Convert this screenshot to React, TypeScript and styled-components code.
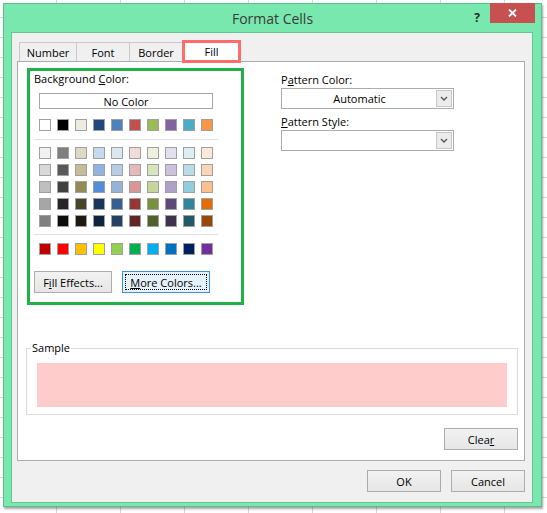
import styled, { createGlobalStyle } from 'styled-components'

const THEME_COLORS = [
  '#ffffff', '#000000', '#eeece1', '#1f497d', '#4f81bd',
  '#c0504d', '#9bbb59', '#8064a2', '#4bacc6', '#f79646',
]

const TINT_ROWS = [
  ['#f2f2f2', '#7f7f7f', '#ddd9c4', '#c5d9f1', '#dce6f1', '#f2dcdb', '#ebf1de', '#e4dfec', '#daeef3', '#fde9d9'],
  ['#d9d9d9', '#595959', '#c4bd97', '#8db4e2', '#b8cce4', '#e6b8b7', '#d8e4bc', '#ccc0da', '#b7dee8', '#fcd5b4'],
  ['#bfbfbf', '#404040', '#948a54', '#538dd5', '#95b3d7', '#da9694', '#c4d79b', '#b1a0c7', '#92cddc', '#fabf8f'],
  ['#a6a6a6', '#262626', '#494529', '#16365c', '#366092', '#963634', '#76933c', '#60497a', '#31869b', '#e26b0a'],
  ['#808080', '#0d0d0d', '#1d1b10', '#0f243e', '#244062', '#632523', '#4f6228', '#403151', '#215967', '#974706'],
]

const STANDARD_COLORS = [
  '#c00000', '#ff0000', '#ffc000', '#ffff00', '#92d050',
  '#00b050', '#00b0f0', '#0070c0', '#002060', '#7030a0',
]

const TABS = [
  { label: 'Number', width: 58 },
  { label: 'Font', width: 54 },
  { label: 'Border', width: 54 },
  { label: 'Fill', width: 59, active: true },
]

const GlobalStyle = createGlobalStyle`
  html, body {
    margin: 0;
    padding: 0;
  }
  body {
    width: 547px;
    height: 513px;
    overflow: hidden;
    background-color: #ffffff;
    background-image:
      linear-gradient(to right, #d6d6d6 1px, transparent 1px),
      linear-gradient(to bottom, #d6d6d6 1px, transparent 1px);
    background-size: 64px 100%, 100% 20px;
    background-position: 56px 0, 0 17px;
    font-family: 'Segoe UI', 'Open Sans', sans-serif;
    font-size: 11px;
    color: #000000;
  }
`

const Desktop = styled.div`
  padding: 3px 0 0 3px;
`

const DialogWindow = styled.div`
  box-sizing: border-box;
  width: 539px;
  height: 504px;
  display: flex;
  flex-direction: column;
  background: #78e8ae;
  border: 1px solid #5cbf8a;
  box-shadow: 1px 2px 2px rgba(0, 0, 0, 0.35);
`

const TitleBar = styled.div`
  height: 28px;
  display: grid;
  grid-template-columns: 1fr auto 1fr;
  align-items: center;
`

const Title = styled.div`
  grid-column: 2;
  font-size: 14px;
  color: #3a3a3a;
  padding-top: 1px;
`

const TitleControls = styled.div`
  grid-column: 3;
  justify-self: end;
  align-self: start;
  display: flex;
  align-items: flex-start;
`

const HelpGlyph = styled.span`
  margin: 5px 10px 0 0;
  font-size: 12px;
  font-weight: 700;
  color: #2b2b2b;
`

const CloseButton = styled.div`
  width: 45px;
  height: 20px;
  margin: -1px 6px 0 0;
  background: #c75050;
  display: flex;
  align-items: center;
  justify-content: center;
`

const Client = styled.div`
  flex: 1;
  margin: 0 8px 3px 7px;
  padding: 7px 7px 10px 5px;
  display: flex;
  flex-direction: column;
  background: #f0f0f0;
  border: 1px solid #62c892;
`

const TabRow = styled.div`
  height: 21px;
  padding-left: 2px;
  display: flex;
  align-items: flex-end;
  position: relative;
  z-index: 1;
`

const Tab = styled.div<{ $active?: boolean; $width: number }>`
  box-sizing: border-box;
  width: ${({ $width }) => $width}px;
  height: ${({ $active }) => ($active ? 23 : 19)}px;
  margin-left: -1px;
  margin-bottom: ${({ $active }) => ($active ? -2 : 0)}px;
  display: flex;
  align-items: center;
  justify-content: center;
  background: ${({ $active }) => ($active ? '#ffffff' : '#f0f0f0')};
  border: ${({ $active }) => ($active ? '3px solid #ff6d6d' : '1px solid #c9c9c9')};
  border-bottom: ${({ $active }) => ($active ? '3px solid #ff6d6d' : 'none')};
  padding-top: ${({ $active }) => ($active ? 0 : 1)}px;

  &:first-child {
    margin-left: 0;
  }
`

const Panel = styled.div`
  box-sizing: border-box;
  height: 400px;
  display: flex;
  flex-direction: column;
  background: #ffffff;
  border: 1px solid #acacac;
  padding: 6px 6px 0 8px;
`

const TopSection = styled.div`
  display: flex;
  align-items: flex-start;
`

const ColorGroup = styled.div`
  box-sizing: border-box;
  width: 217px;
  height: 237px;
  margin-left: 1px;
  padding: 0 0 0 4px;
  border: 3px solid #22b04b;
  display: flex;
  flex-direction: column;
`

const Label = styled.div`
  line-height: 16px;
  white-space: nowrap;
`

const Key = styled.span`
  text-decoration: underline;
  text-underline-offset: 1px;
`

const NoColorButton = styled.div`
  box-sizing: border-box;
  width: 174px;
  height: 16px;
  margin: 6px 0 0 5px;
  display: flex;
  align-items: center;
  justify-content: center;
  border: 1px solid #a6a6a6;
  background: #ffffff;
`

const SwatchRow = styled.div<{ $gap: number }>`
  display: flex;
  gap: 6px;
  margin: ${({ $gap }) => $gap}px 0 0 5px;
`

const Swatch = styled.div`
  box-sizing: border-box;
  width: 12px;
  height: 12px;
  border: 1px solid #a0a0a0;
`

const Separator = styled.div`
  width: 184px;
  height: 1px;
  margin-top: 8px;
  background: #e2e2e2;
`

const ButtonRow = styled.div`
  display: flex;
  gap: 10px;
  margin-top: 16px;
`

const PushButton = styled.div<{ $width: number; $focused?: boolean }>`
  box-sizing: border-box;
  width: ${({ $width }) => $width}px;
  height: 22px;
  padding: 2px;
  border: 1px solid ${({ $focused }) => ($focused ? '#3c8fe0' : '#adadad')};
  background: ${({ $focused }) =>
    $focused ? '#e5f1fb' : 'linear-gradient(#f2f2f2, #e6e6e6)'};
  display: flex;
`

const ButtonFace = styled.div<{ $focused?: boolean }>`
  flex: 1;
  display: flex;
  align-items: center;
  justify-content: center;
  outline: ${({ $focused }) => ($focused ? '1px dotted #000000' : 'none')};
  outline-offset: -1px;
  white-space: nowrap;
`

const PatternColumn = styled.div`
  margin: 4px 0 0 37px;
  display: flex;
  flex-direction: column;
`

const Dropdown = styled.div<{ $gap: number }>`
  box-sizing: border-box;
  width: 173px;
  height: 21px;
  margin-bottom: ${({ $gap }) => $gap}px;
  padding: 1px;
  display: flex;
  border: 1px solid #ababab;
  background: #ffffff;
`

const DropdownValue = styled.div`
  flex: 1;
  display: flex;
  align-items: center;
  justify-content: center;
`

const DropdownArrow = styled.div`
  box-sizing: border-box;
  width: 16px;
  display: flex;
  align-items: center;
  justify-content: center;
  background: #ececec;
  border: 1px solid #c6c6c6;
`

const SampleGroup = styled.fieldset`
  box-sizing: border-box;
  width: 492px;
  margin: 36px 0 0 0;
  padding: 0 10px 7px;
  min-width: 0;
  border: 1px solid #dcdcdc;
`

const SampleLegend = styled.legend`
  margin-left: -6px;
  padding: 0 1px;
  line-height: 14px;
`

const SampleFill = styled.div`
  height: 44px;
  margin-top: 8px;
  background: #ffcccc;
`

const ClearRow = styled.div`
  display: flex;
  justify-content: flex-end;
  margin: 13px 0 0 0;
`

const Footer = styled.div`
  display: flex;
  justify-content: flex-end;
  gap: 10px;
  margin-top: 9px;
`

const Chevron = () => (
  <svg width="8" height="5" viewBox="0 0 8 5">
    <polyline points="1,1 4,4 7,1" fill="none" stroke="#555555" strokeWidth="1.4" />
  </svg>
)

const CloseGlyph = () => (
  <svg width="9" height="8" viewBox="0 0 9 8">
    <path d="M1 0.5 L8 7.5 M8 0.5 L1 7.5" stroke="#ffffff" strokeWidth="1.8" />
  </svg>
)

const App = () => (
  <>
    <GlobalStyle />
    <Desktop>
      <DialogWindow>
        <TitleBar>
          <Title>Format Cells</Title>
          <TitleControls>
            <HelpGlyph>?</HelpGlyph>
            <CloseButton>
              <CloseGlyph />
            </CloseButton>
          </TitleControls>
        </TitleBar>
        <Client>
          <TabRow>
            {TABS.map((tab) => (
              <Tab key={tab.label} $active={tab.active} $width={tab.width}>
                {tab.label}
              </Tab>
            ))}
          </TabRow>
          <Panel>
            <TopSection>
              <ColorGroup>
                <Label>
                  Background <Key>C</Key>olor:
                </Label>
                <NoColorButton>No Color</NoColorButton>
                <SwatchRow $gap={10}>
                  {THEME_COLORS.map((color) => (
                    <Swatch key={color} style={{ background: color }} />
                  ))}
                </SwatchRow>
                <Separator />
                {TINT_ROWS.map((row, index) => (
                  <SwatchRow key={index} $gap={index === 0 ? 7 : 5}>
                    {row.map((color) => (
                      <Swatch key={color} style={{ background: color }} />
                    ))}
                  </SwatchRow>
                ))}
                <Separator style={{ marginTop: 7 }} />
                <SwatchRow $gap={8}>
                  {STANDARD_COLORS.map((color) => (
                    <Swatch key={color} style={{ background: color }} />
                  ))}
                </SwatchRow>
                <ButtonRow>
                  <PushButton $width={78}>
                    <ButtonFace>
                      F<Key>i</Key>ll Effects...
                    </ButtonFace>
                  </PushButton>
                  <PushButton $width={88} $focused>
                    <ButtonFace $focused>
                      <Key>M</Key>ore Colors...
                    </ButtonFace>
                  </PushButton>
                </ButtonRow>
              </ColorGroup>
              <PatternColumn>
                <Label>
                  P<Key>a</Key>ttern Color:
                </Label>
                <Dropdown $gap={5}>
                  <DropdownValue>Automatic</DropdownValue>
                  <DropdownArrow>
                    <Chevron />
                  </DropdownArrow>
                </Dropdown>
                <Label>
                  <Key>P</Key>attern Style:
                </Label>
                <Dropdown $gap={0}>
                  <DropdownValue />
                  <DropdownArrow>
                    <Chevron />
                  </DropdownArrow>
                </Dropdown>
              </PatternColumn>
            </TopSection>
            <SampleGroup>
              <SampleLegend>Sample</SampleLegend>
              <SampleFill />
            </SampleGroup>
            <ClearRow>
              <PushButton $width={74}>
                <ButtonFace>
                  Clea<Key>r</Key>
                </ButtonFace>
              </PushButton>
            </ClearRow>
          </Panel>
          <Footer>
            <PushButton $width={74}>
              <ButtonFace>OK</ButtonFace>
            </PushButton>
            <PushButton $width={74}>
              <ButtonFace>Cancel</ButtonFace>
            </PushButton>
          </Footer>
        </Client>
      </DialogWindow>
    </Desktop>
  </>
)

export default App
